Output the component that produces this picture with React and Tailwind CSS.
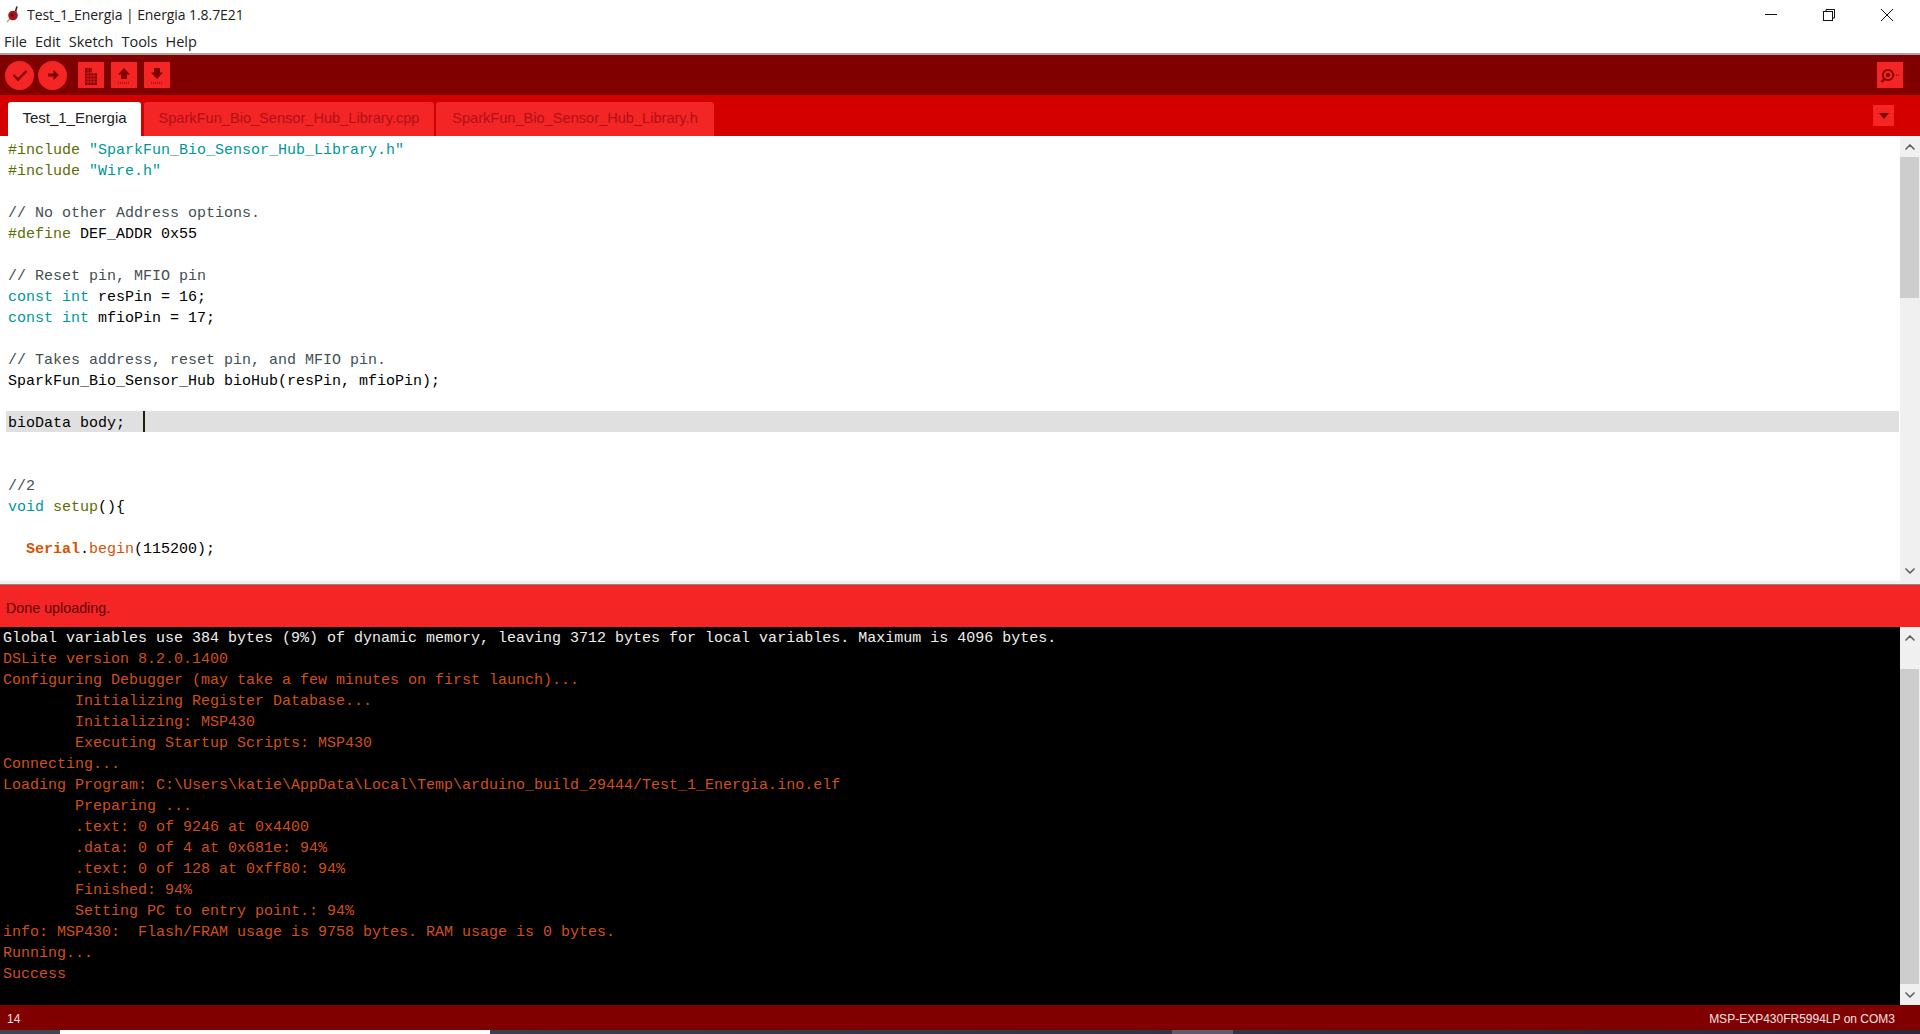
import { ChevronUp, ChevronDown } from "lucide-react";

const C = ({ c, children }) => <span className={c}>{children}</span>;

const pre = "text-[#5e6d03]";
const str = "text-[#00979c]";
const com = "text-[#434f54]";
const key = "text-[#00979c]";

const codeLines = [
  <><C c={pre}>#include</C> <C c={str}>"SparkFun_Bio_Sensor_Hub_Library.h"</C></>,
  <><C c={pre}>#include</C> <C c={str}>"Wire.h"</C></>,
  "",
  <C c={com}>// No other Address options.</C>,
  <><C c={pre}>#define</C> DEF_ADDR 0x55</>,
  "",
  <C c={com}>// Reset pin, MFIO pin</C>,
  <><C c={key}>const</C> <C c={key}>int</C> resPin = 16;</>,
  <><C c={key}>const</C> <C c={key}>int</C> mfioPin = 17;</>,
  "",
  <C c={com}>// Takes address, reset pin, and MFIO pin.</C>,
  "SparkFun_Bio_Sensor_Hub bioHub(resPin, mfioPin);",
  "",
];

const consoleLines = [
  "DSLite version 8.2.0.1400",
  "Configuring Debugger (may take a few minutes on first launch)...",
  "\tInitializing Register Database...",
  "\tInitializing: MSP430",
  "\tExecuting Startup Scripts: MSP430",
  "Connecting...",
  "Loading Program: C:\\Users\\katie\\AppData\\Local\\Temp\\arduino_build_29444/Test_1_Energia.ino.elf",
  "\tPreparing ...",
  "\t.text: 0 of 9246 at 0x4400",
  "\t.data: 0 of 4 at 0x681e: 94%",
  "\t.text: 0 of 128 at 0xff80: 94%",
  "\tFinished: 94%",
  "\tSetting PC to entry point.: 94%",
  "info: MSP430:  Flash/FRAM usage is 9758 bytes. RAM usage is 0 bytes.",
  "Running...",
  "Success",
];

const ToolRound = ({ children }) => (
  <div className="w-[29px] h-[29px] rounded-full bg-[#f42525] flex items-center justify-center">
    <svg width="16" height="16" viewBox="0 0 16 16" fill="none">{children}</svg>
  </div>
);

const ToolSquare = ({ children, className = "" }) => (
  <div className={`w-[26px] h-[26px] bg-[#f42525] flex items-center justify-center ${className}`}>
    <svg width="20" height="20" viewBox="0 0 20 20" fill="none">{children}</svg>
  </div>
);

const Scrollbar = ({ thumbTop, thumbHeight }) => (
  <div className="w-5 bg-[#f0f0f0] flex flex-col shrink-0 pr-[1px]">
    <div className="h-[21px] flex items-center justify-center shrink-0">
      <ChevronUp size={16} strokeWidth={2.5} className="text-[#606060]" />
    </div>
    <div className="flex-1 flex flex-col">
      <div className={thumbTop} />
      <div className={`${thumbHeight} bg-[#cdcdcd]`} />
      <div className="flex-1" />
    </div>
    <div className="h-[21px] flex items-center justify-center shrink-0">
      <ChevronDown size={16} strokeWidth={2.5} className="text-[#606060]" />
    </div>
  </div>
);

export default function App() {
  return (
    <div className="w-[1920px] h-[1034px] overflow-hidden flex flex-col bg-white font-['Liberation_Sans',sans-serif]">
      {/* title bar */}
      <div className="h-[29px] flex items-center shrink-0 relative">
        <svg className="ml-[6px]" width="16" height="18" viewBox="0 0 16 18">
          <path d="M11 5L1 16" stroke="#a8a4a0" strokeWidth="1.2" />
          <circle cx="7" cy="9.5" r="4.8" fill="#a8151c" />
          <circle cx="6" cy="9" r="1.6" fill="#5a1014" />
          <path d="M9.5 5.5L11 0.5" stroke="#3c2a22" strokeWidth="1.6" />
        </svg>
        <span className="ml-[5px] text-[14px] tracking-[-0.07px] text-[#222] font-['Open_Sans',sans-serif]">Test_1_Energia | Energia 1.8.7E21</span>
        <div className="ml-auto flex items-center mr-[4px]">
          <div className="w-[58px] flex justify-center">
            <svg width="14" height="14" viewBox="0 0 14 14"><path d="M1 6.5H13" stroke="#111" strokeWidth="1" /></svg>
          </div>
          <div className="w-[58px] flex justify-center">
            <svg width="14" height="14" viewBox="0 0 14 14" fill="none" stroke="#111">
              <rect x="1.5" y="3.5" width="9" height="9" />
              <path d="M4 3.5V1.5H12.5V10H10.5" />
            </svg>
          </div>
          <div className="w-[58px] flex justify-center">
            <svg width="14" height="14" viewBox="0 0 14 14" fill="none" stroke="#111"><path d="M1 1L13 13M13 1L1 13" /></svg>
          </div>
        </div>
      </div>

      {/* menu */}
      <div className="h-[24px] flex items-center shrink-0 text-[14.5px] text-[#222] font-['Open_Sans',sans-serif] pl-[4px] pt-[1px] gap-[8px]">
        <span>File</span>
        <span>Edit</span>
        <span>Sketch</span>
        <span>Tools</span>
        <span>Help</span>
      </div>
      <div className="h-[2px] bg-[#b0a0a0] shrink-0" />

      {/* toolbar */}
      <div className="h-[40px] bg-[#800000] flex items-center shrink-0 pl-[5px] pr-[4px]">
        <div className="flex gap-[4px]">
          <ToolRound><path d="M1.5 8L6 12.5L14.5 4" stroke="#800000" strokeWidth="2.4" /></ToolRound>
          <ToolRound><path d="M3 8H9.5" stroke="#800000" strokeWidth="3" /><path d="M8.5 3L14 8L8.5 13Z" fill="#800000" /></ToolRound>
        </div>
        <ToolSquare className="ml-[11px]">
          <path d="M4 3H11V8H16V20H4Z" fill="#800000" />
          <path d="M4 8H16M4 11H16M4 14H16M4 17H16M7 3V20M10 3V20M13 8V20" stroke="#f42525" strokeWidth="0.7" />
        </ToolSquare>
        <ToolSquare className="ml-[7px]">
          <path d="M10 3L16 9.5H13V14H7V9.5H4Z" fill="#800000" />
          <path d="M4 18H16" stroke="#800000" strokeDasharray="1 1" />
        </ToolSquare>
        <ToolSquare className="ml-[7px]">
          <path d="M10 14L16 7.5H13V3H7V7.5H4Z" fill="#800000" />
          <path d="M4 18H16" stroke="#800000" strokeDasharray="1 1" />
        </ToolSquare>
        <ToolSquare className="ml-auto mr-[13px]">
          <circle cx="8" cy="10" r="5.2" stroke="#800000" strokeWidth="1.8" />
          <circle cx="8" cy="10" r="2" fill="#800000" />
          <path d="M4.5 14L1.5 17" stroke="#800000" strokeWidth="2.4" />
          <path d="M14 10H20" stroke="#800000" strokeDasharray="1 1" />
        </ToolSquare>
      </div>

      {/* tabs */}
      <div className="h-[41px] bg-[#d40000] flex items-end shrink-0 pl-[8px] text-[14.6px] relative">
        <div className="w-[133px] h-[34px] pb-[1px] bg-white rounded-t-[3px] flex items-center justify-center text-[15px] text-[#222]">Test_1_Energia</div>
        <div className="ml-[3px] w-[290px] h-[34px] pb-[1px] bg-[#f42525] rounded-t-[3px] flex items-center justify-center text-[#b01018]">SparkFun_Bio_Sensor_Hub_Library.cpp</div>
        <div className="ml-[2px] w-[278px] h-[34px] pb-[1px] bg-[#f42525] rounded-t-[3px] flex items-center justify-center text-[#b01018]">SparkFun_Bio_Sensor_Hub_Library.h</div>
        <div className="ml-auto mr-[26px] mb-[10px] w-[21px] h-[21px] bg-[#f42525] flex items-center justify-center">
          <svg width="12" height="8" viewBox="0 0 12 8"><path d="M1 1H11L6 7Z" fill="#800000" /></svg>
        </div>
      </div>

      {/* editor */}
      <div className="h-[445px] flex shrink-0 bg-white">
        <div className="flex-1 pt-[2px] overflow-hidden font-['Liberation_Mono',monospace] text-[15px] leading-[25px] text-black whitespace-pre">
          {codeLines.map((line, i) => (
            <div key={i} className="h-[21px] pl-[8px]">{line}</div>
          ))}
          <div className="h-[21px] ml-[6px] mr-[1px] pl-[2px] bg-[#e0e0e0] relative">
            bioData body;
            <div className="absolute left-[137px] top-0 w-[2px] h-[21px] bg-[#202000]" />
          </div>
          <div className="h-[21px]" />
          <div className="h-[21px]" />
          <div className="h-[21px] pl-[8px] text-[#434f54]">//2</div>
          <div className="h-[21px] pl-[8px]"><C c={key}>void</C> <C c={pre}>setup</C>(){"{"}</div>
          <div className="h-[21px]" />
          <div className="h-[21px] pl-[8px]">  <C c="text-[#d35400] font-bold">Serial</C>.<C c="text-[#d35400]">begin</C>(115200);</div>
        </div>
        <Scrollbar thumbTop="h-0" thumbHeight="h-[141px]" />
      </div>

      <div className="h-[3px] bg-[#f0f0f0] shrink-0" />
      <div className="h-[1px] bg-[#8a8a8a] shrink-0" />

      {/* status */}
      <div className="h-[42px] bg-[#f42525] flex items-center pl-[6px] pt-[5px] text-[14.3px] text-[#5c0808] shrink-0">Done uploading.</div>

      {/* console */}
      <div className="h-[378px] flex shrink-0 bg-black">
        <div className="flex-1 pl-[3px] overflow-hidden font-['Liberation_Mono',monospace] text-[15px] leading-[23px] whitespace-pre [tab-size:8] text-[#d0501a]">
          <div className="h-[21px] text-[#eeeeee]">Global variables use 384 bytes (9%) of dynamic memory, leaving 3712 bytes for local variables. Maximum is 4096 bytes.</div>
          {consoleLines.map((line, i) => (
            <div key={i} className="h-[21px]">{line}</div>
          ))}
        </div>
        <Scrollbar thumbTop="h-[21px]" thumbHeight="h-[315px]" />
      </div>

      {/* footer */}
      <div className="h-[25px] bg-[#800000] flex items-center justify-between pl-[7px] pr-[25px] pt-[3px] text-[12px] text-[#f0e0e0] shrink-0">
        <span>14</span>
        <span>MSP-EXP430FR5994LP on COM3</span>
      </div>

      {/* window behind */}
      <div className="h-[4px] flex shrink-0 bg-gradient-to-r from-[#3c4a50] to-[#252a3c]">
        <div className="ml-[60px] w-[430px] bg-white" />
        <div className="ml-[682px] w-[61px] bg-[#5a5f66]" />
      </div>
    </div>
  );
}
